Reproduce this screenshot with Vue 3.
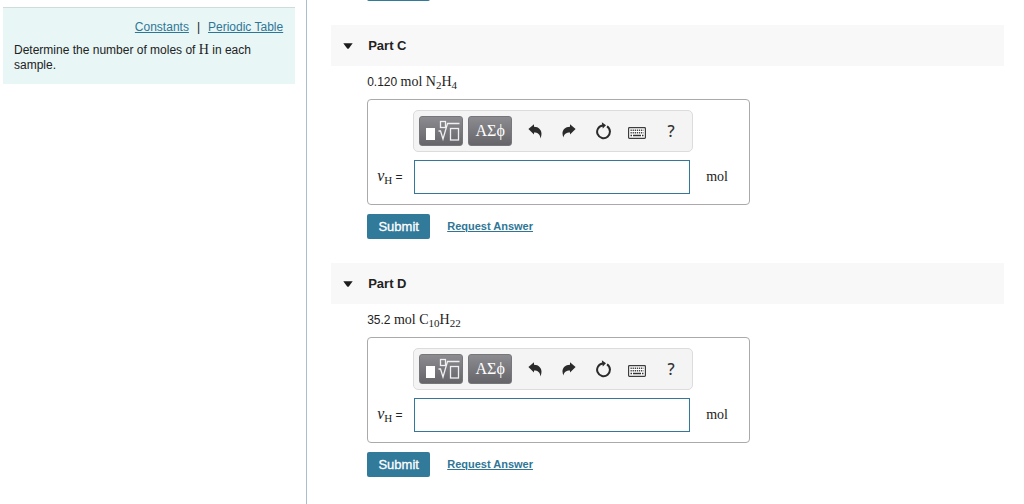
<script setup>
const parts = [
  { id: 'c', title: 'Part C', amount: '0.120', formula: [['N', '2'], ['H', '4']] },
  { id: 'd', title: 'Part D', amount: '35.2', formula: [['C', '10'], ['H', '22']] },
]
</script>

<template>
  <div class="page">
    <aside class="side">
      <section class="intro">
        <nav class="links">
          <a href="#constants">Constants</a><span class="bar">|</span><a href="#table">Periodic Table</a>
        </nav>
        <p>Determine the number of moles of <span class="math">H</span> in each sample.</p>
      </section>
    </aside>
    <main class="main">
      <div class="previous"><button class="submit" type="button" aria-label="Submit"></button></div>
      <section v-for="part in parts" :key="part.id" class="part">
        <h2 class="head">
          <svg class="caret" viewBox="0 0 10 6"><path d="M.3 .3H9.7L5.8 5.4Q5 6.2 4.2 5.4Z" fill="#1c1c1c" /></svg>
          {{ part.title }}
        </h2>
        <form class="body" @submit.prevent>
          <p class="question">
            {{ part.amount }} <span class="math">mol <template v-for="f in part.formula" :key="f[0]">{{ f[0] }}<sub>{{ f[1] }}</sub></template></span>
          </p>
          <div class="box">
            <div class="toolbar">
              <button class="dark" type="button" aria-label="Templates">
                <svg width="38" height="24" viewBox="0 0 38 24" fill="none">
                  <rect x="4" y="9" width="9" height="12" fill="#fff" />
                  <g stroke="#f0f0f2" stroke-width="1.3">
                    <rect x="18.5" y="2.5" width="5" height="6" />
                    <path d="M16.5 12H18.5L21 20L25.5 4.5H37.5" />
                    <rect x="28.5" y="9.5" width="8" height="11.5" />
                  </g>
                </svg>
              </button>
              <button class="dark greek" type="button">ΑΣϕ</button>
              <button class="tool" type="button" aria-label="Undo">
                <svg width="14" height="15" viewBox="0 0 14 15"><path d="M.4 5L6 .3V2.8C12.6 3 15.2 8.6 12.4 14.4C12.2 10.2 9.8 8.4 6 8.4V10.6Z" fill="#2b2b2b" /></svg>
              </button>
              <button class="tool" type="button" aria-label="Redo">
                <svg width="14" height="15" viewBox="0 0 14 15"><path d="M13.6 5L8 .3V2.8C1.4 3-1.2 8.6 1.6 13.4C1.8 10.2 4.2 8.4 8 8.4V10.6Z" fill="#2b2b2b" /></svg>
              </button>
              <button class="tool" type="button" aria-label="Reset">
                <svg width="16" height="18" viewBox="0 0 16 18"><path d="M12 4.4A6.4 6.4 0 1 1 8 3.4" fill="none" stroke="#2b2b2b" stroke-width="2" /><path d="M6.8 .2L11 3.2L7.8 6.6Z" fill="#2b2b2b" /></svg>
              </button>
              <button class="tool keys" type="button" aria-label="Keyboard shortcuts">
                <svg width="18" height="12" viewBox="0 0 18 12"><rect x=".6" y=".6" width="16.8" height="10.8" rx=".8" fill="#fff" stroke="#3c3c3c" stroke-width="1.2" /><path d="M2.5 3.2H15.5M2.5 5.7H15.5" stroke="#444" stroke-width="1.4" stroke-dasharray="1.3 .8" /><path d="M2.5 8.5H4M5 8.5H13M14 8.5H15.5" stroke="#333" stroke-width="1.4" /></svg>
              </button>
              <button class="tool help" type="button" aria-label="Help">?</button>
            </div>
            <div class="entry">
              <label :for="'nu-' + part.id"><span class="math"><i>ν</i><sub>H</sub></span> =</label>
              <input :id="'nu-' + part.id" type="text">
              <span class="math unit">mol</span>
            </div>
          </div>
          <div class="actions">
            <button class="submit" type="submit">Submit</button>
            <a href="#answer">Request Answer</a>
          </div>
        </form>
      </section>
    </main>
  </div>
</template>

<style>
body {
  background: #fff;
  overflow: hidden;
}
</style>

<style scoped>
.page {
  display: flex;
  height: 100vh;
  overflow: hidden;
  font: 12px/15px "Liberation Sans", Arial, sans-serif;
  color: #222;
}
.page * { box-sizing: border-box; }
p, h2 { margin: 0; }
button { font-family: inherit; cursor: pointer; }
a { color: #2f7696; }
.side {
  flex: 0 0 30%;
  padding: 7px 11px 0 3px;
  border-right: 1px solid #a9bfd0;
}
.intro {
  padding: 12px 12px 11px 11px;
  background: #e8f6f6;
  border-top: 1px solid #cfdcdc;
}
.links { text-align: right; margin-bottom: 8px; }
.bar { margin: 0 8px; }
.math {
  font-family: "Liberation Serif", "Times New Roman", serif;
  font-size: 14px;
  line-height: 14px;
}
sub {
  font-size: 11px;
  line-height: 0;
  vertical-align: -3px;
}
.main {
  flex: 1;
  min-width: 0;
  padding: 0 20px 0 24px;
}
.previous { margin-top: -24px; padding-left: 36px; }
.submit {
  display: block;
  width: 63px;
  height: 25px;
  padding: 0;
  border: 0;
  border-radius: 2px;
  background: #327a9a;
  color: #fff;
  font-size: 13px;
  -webkit-text-stroke: 0.3px #fff;
}
.part { padding-top: 24px; }
.head {
  display: flex;
  align-items: center;
  gap: 15px;
  height: 41px;
  padding-left: 12px;
  background: #f8f8f8;
  font-size: 13px;
}
.caret { width: 10px; height: 6px; }
.body { padding-left: 36px; }
.question {
  height: 33px;
  padding-top: 9px;
}
.box {
  width: 383px;
  height: 106px;
  padding: 10px 9px 0;
  border: 1px solid #aaa;
  border-radius: 4px;
}
.toolbar {
  display: flex;
  align-items: center;
  width: 280px;
  height: 42px;
  margin-left: 36px;
  padding-left: 5px;
  background: #f4f4f4;
  border: 1px solid #dcdcdc;
  border-radius: 5px;
}
.dark {
  display: flex;
  align-items: center;
  justify-content: center;
  width: 44px;
  height: 30px;
  margin-right: 5px;
  padding: 0;
  border: 1px solid #77777b;
  border-radius: 3px;
  background: linear-gradient(#8b8b90, #66666a);
  color: #fff;
}
.greek {
  margin-right: 6px;
  font-family: "Liberation Serif", serif;
  font-size: 16px;
}
.tool {
  display: flex;
  align-items: center;
  justify-content: center;
  width: 34px;
  height: 30px;
  padding: 0;
  border: 0;
  background: none;
  color: #333;
}
.keys { padding-top: 4px; }
.help { font-family: "Noto Sans", sans-serif; font-size: 16px; font-weight: 500; }
.entry {
  display: flex;
  align-items: center;
  margin-top: 8px;
}
.entry label { width: 37px; white-space: nowrap; }
.entry i { font-size: 16px; }
.entry input {
  width: 276px;
  height: 34px;
  padding: 0 6px;
  border: 1px solid #32789a;
  border-radius: 0;
  background: #fff;
  outline: 0;
  font: inherit;
}
.unit { margin-left: 16px; }
.actions {
  display: flex;
  align-items: center;
  gap: 17px;
  margin-top: 9px;
}
.actions a {
  font-size: 11px;
  font-weight: bold;
}
</style>
